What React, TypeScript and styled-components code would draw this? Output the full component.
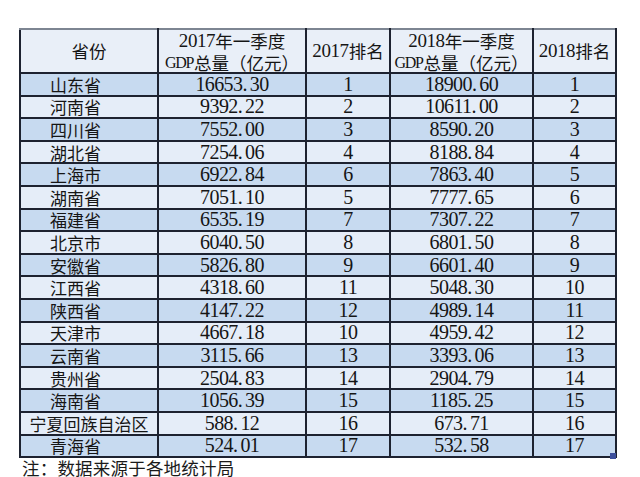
import React from "react";
import styled, { createGlobalStyle } from "styled-components";

const Global = createGlobalStyle`
  html, body { margin: 0; padding: 0; background: #ffffff; }
  body { width: 640px; height: 477px; overflow: hidden; }
`;

const Page = styled.div`
  padding: 28px 0 0 19px;
  font-family: "Noto Sans CJK SC", "Liberation Serif", serif;
  color: #151515;
`;

const TableWrap = styled.div`
  position: relative;
  width: 596px;
`;

const Table = styled.table`
  width: 596px;
  border-collapse: collapse;
  table-layout: fixed;
  border: 2px solid #1d2230;
  border-top-color: #7d8592;
`;

const HeadRow = styled.tr`
  height: 43px;
  background: #e9eff8;
`;

const HeadCell = styled.th`
  border: 2px solid #1d2230;
  border-top-color: #7d8592;
  padding: 0;
  font-weight: 400;
  font-size: 17.5px;
  line-height: 20px;
  text-align: center;
  vertical-align: middle;
  white-space: nowrap;
  color: #151515;
`;

const HeadStack = styled.div`
  display: flex;
  flex-direction: column;
  align-items: center;
  gap: 3px;
  padding-top: 1px;
`;

const HeadLine = styled.div`
  height: 19px;
  line-height: 19px;
  white-space: nowrap;
`;

const Num = styled.span<{ $narrow?: boolean }>`
  font-family: "Liberation Serif", serif;
  font-size: ${(p) => (p.$narrow ? "16px" : "19px")};
  letter-spacing: ${(p) => (p.$narrow ? "-1.4px" : "-0.4px")};
  margin-right: ${(p) => (p.$narrow ? "1px" : "0")};
  vertical-align: top;
  line-height: 20px;
`;

const Row = styled.tr<{ $shade: boolean }>`
  height: 22.6px;
  background: ${(p) => (p.$shade ? "#c7daf0" : "#e5edf8")};
`;

const Cell = styled.td<{ $indent?: boolean }>`
  border: 2px solid #1d2230;
  padding: ${(p) => (p.$indent ? "0 0 0 29px" : "0")};
  text-align: ${(p) => (p.$indent ? "left" : "center")};
  vertical-align: middle;
  font-size: 17px;
  line-height: 17px;
  white-space: nowrap;
`;

const NumText = styled.span`
  font-family: "Liberation Serif", serif;
  font-size: 20px;
  letter-spacing: -0.6px;
  line-height: 17px;
  vertical-align: top;
`;

const Dot = styled.span`
  margin-right: 3px;
`;

const Handle = styled.div`
  position: absolute;
  right: -1px;
  bottom: -1px;
  width: 6px;
  height: 6px;
  background: #3c4f9c;
`;

const Note = styled.div`
  margin-top: 2px;
  padding-left: 3px;
  font-size: 17.5px;
  line-height: 16px;
  color: #1a1a1a;
  letter-spacing: 0.2px;
`;

type Item = [string, string, number, string, number];

const data: Item[] = [
  ["山东省", "16653.30", 1, "18900.60", 1],
  ["河南省", "9392.22", 2, "10611.00", 2],
  ["四川省", "7552.00", 3, "8590.20", 3],
  ["湖北省", "7254.06", 4, "8188.84", 4],
  ["上海市", "6922.84", 6, "7863.40", 5],
  ["湖南省", "7051.10", 5, "7777.65", 6],
  ["福建省", "6535.19", 7, "7307.22", 7],
  ["北京市", "6040.50", 8, "6801.50", 8],
  ["安徽省", "5826.80", 9, "6601.40", 9],
  ["江西省", "4318.60", 11, "5048.30", 10],
  ["陕西省", "4147.22", 12, "4989.14", 11],
  ["天津市", "4667.18", 10, "4959.42", 12],
  ["云南省", "3115.66", 13, "3393.06", 13],
  ["贵州省", "2504.83", 14, "2904.79", 14],
  ["海南省", "1056.39", 15, "1185.25", 15],
  ["宁夏回族自治区", "588.12", 16, "673.71", 16],
  ["青海省", "524.01", 17, "532.58", 17],
];

function Amount({ value }: { value: string }) {
  const [a, b] = value.split(".");
  return (
    <NumText>
      {a}
      <Dot>.</Dot>
      {b}
    </NumText>
  );
}

function GdpHeader({ year }: { year: string }) {
  return (
    <HeadStack>
      <HeadLine>
        <Num>{year}</Num>年一季度
      </HeadLine>
      <HeadLine>
        <Num $narrow>GDP</Num>总量（亿元）
      </HeadLine>
    </HeadStack>
  );
}

export default function App() {
  return (
    <>
      <Global />
      <Page>
        <TableWrap>
          <Table>
            <colgroup>
              <col style={{ width: 138 }} />
              <col style={{ width: 148 }} />
              <col style={{ width: 84 }} />
              <col style={{ width: 143 }} />
              <col style={{ width: 83 }} />
            </colgroup>
            <thead>
              <HeadRow>
                <HeadCell>省份</HeadCell>
                <HeadCell>
                  <GdpHeader year="2017" />
                </HeadCell>
                <HeadCell>
                  <Num>2017</Num>排名
                </HeadCell>
                <HeadCell>
                  <GdpHeader year="2018" />
                </HeadCell>
                <HeadCell>
                  <Num>2018</Num>排名
                </HeadCell>
              </HeadRow>
            </thead>
            <tbody>
              {data.map(([name, g17, r17, g18, r18], i) => (
                <Row key={name} $shade={i % 2 === 0}>
                  <Cell $indent={name.length <= 3}>{name}</Cell>
                  <Cell>
                    <Amount value={g17} />
                  </Cell>
                  <Cell>
                    <NumText>{r17}</NumText>
                  </Cell>
                  <Cell>
                    <Amount value={g18} />
                  </Cell>
                  <Cell>
                    <NumText>{r18}</NumText>
                  </Cell>
                </Row>
              ))}
            </tbody>
          </Table>
          <Handle />
        </TableWrap>
        <Note>注：数据来源于各地统计局</Note>
      </Page>
    </>
  );
}
